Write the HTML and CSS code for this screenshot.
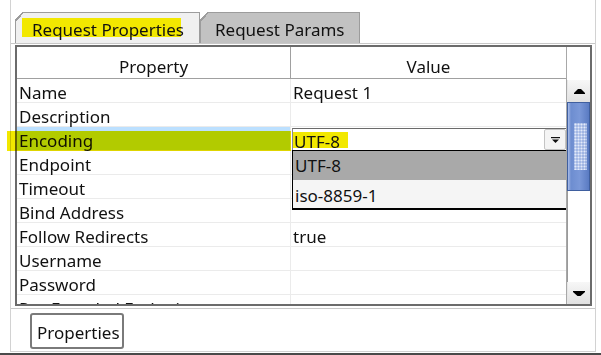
FILE: index.html
```html
<!DOCTYPE html>
<html lang="en">
<head>
<meta charset="UTF-8">
<title>Request Properties</title>
<link rel="stylesheet" href="styles.css">
</head>
<body>

<div class="window">
  <div class="tabs">
    <div class="tab active"><span class="mark">Request Properties</span></div>
    <div class="tab second">Request Params</div>
  </div>

  <div class="pane">
    <div class="panel">
      <div class="grid">
        <div class="head">
          <div class="hcell">Property</div>
          <div class="hcell">Value</div>
        </div>
        <div class="row"><div class="cell">Name</div><div class="cell">Request 1</div></div>
        <div class="row"><div class="cell">Description</div><div class="cell"></div></div>
        <div class="row sel">
          <div class="cell">Encoding</div>
          <div class="cell combo-cell">
            <div class="combo">
              <div class="combo-text"><span class="mark small">UTF-8</span></div>
              <div class="combo-btn">
                <svg width="9" height="6" viewBox="0 0 9 6"><rect x="0" y="0" width="9" height="1.2" fill="#111"/><polygon points="1,2.5 8,2.5 4.5,6" fill="#111"/></svg>
              </div>
            </div>
            <ul class="list">
              <li class="opt on">UTF-8</li>
              <li class="opt">iso-8859-1</li>
            </ul>
          </div>
        </div>
        <div class="row"><div class="cell">Endpoint</div><div class="cell"></div></div>
        <div class="row"><div class="cell">Timeout</div><div class="cell"></div></div>
        <div class="row"><div class="cell">Bind Address</div><div class="cell"></div></div>
        <div class="row"><div class="cell">Follow Redirects</div><div class="cell">true</div></div>
        <div class="row"><div class="cell">Username</div><div class="cell"></div></div>
        <div class="row"><div class="cell">Password</div><div class="cell"></div></div>
        <div class="row"><div class="cell">Pre-Encoded Endpoint</div><div class="cell"></div></div>
      </div>

      <div class="scroll">
        <div class="scroll-top"></div>
        <div class="sb-btn">
          <svg width="11" height="5" viewBox="0 0 11 5"><polygon points="4,0 7,0 11,4 11,5 0,5 0,4" fill="#000"/></svg>
        </div>
        <div class="thumb"><div class="grip"></div></div>
        <div class="track"></div>
        <div class="sb-btn">
          <svg width="12" height="5" viewBox="0 0 12 5"><polygon points="0,0 12,0 12,1 7.5,5 4.5,5 0,1" fill="#000"/></svg>
        </div>
      </div>
    </div>
  </div>

  <div class="footer">
    <button class="btn">Properties</button>
  </div>

  <div class="row-mark"></div>
</div>
<div class="baseline"></div>

</body>
</html>
```

FILE: styles.css
```css
* { box-sizing: border-box; }
body { margin:0; background:#fff; font-family:"Noto Sans", sans-serif; font-size:17px; color:#111; overflow:hidden; }

.window { position:relative; margin-left:10px; width:586px; height:352px; border:1px solid #d2d2d2; border-top:0; }

/* tabs */
.tabs { display:flex; height:43px; padding:12px 0 0 4px; }
.tab { position:relative; height:31px; border:1px solid #9c9c9c; border-bottom:0; background:#c2c2c2; line-height:23px; padding-top:5px; white-space:nowrap; }
.tab::before { content:""; position:absolute; left:-1px; top:-1px; width:8px; height:9px; background:linear-gradient(to bottom right, #fff 44%, #9c9c9c 44% 60%, transparent 60%); }
.tab.active { width:185px; background:#f0f0f0; padding-left:6px; }
.tab.second { width:160px; padding-left:14px; }

.mark { padding-left:10px; background:linear-gradient(#f2e800, #f2e800) 0 0 / calc(100% - 3px) 19px no-repeat; }
.mark.small { padding:0 8px 0 1px; background-position:0 2px; background-size:100% 16px; }

/* pane + grid panel */
.pane { border-top:1px solid #c8c8c8; border-bottom:1px solid #c8c8c8; padding:1px 0 2px 4px; }
.panel { display:flex; width:577px; height:261px; border:2px solid #6b6b6b; background:#fff; }
.grid { width:550px; border-right:1px solid #a8a8a8; overflow:hidden; }

.head { display:flex; height:32px; border-bottom:1px solid #a0a0a0; }
.hcell { flex:1; text-align:center; padding-top:8px; line-height:23px; }
.hcell:first-child { flex:none; width:274px; border-right:1px solid #a0a0a0; }

.row { display:flex; height:24px; border-bottom:1px solid #ebebeb; }
.cell { flex:1; line-height:22px; padding:3px 0 0 2px; white-space:nowrap; }
.cell:first-child { flex:none; width:274px; border-right:1px solid #ebebeb; }
.row.sel .cell:first-child { background:#bce0ff; }

.combo-cell { position:relative; padding:1px 0 0 1px; }
.combo { display:flex; height:22px; border-top:1px solid #6b6b6b; border-left:1px solid #8a8a8a; background:#fff; }
.combo-text { flex:1; line-height:21px; padding-top:2px; }
.combo-btn { width:22px; height:21px; border:1px solid #c4c4c4; border-radius:2px; background:#f4f4f4; display:flex; align-items:center; justify-content:center; }

.list { position:absolute; left:1px; top:23px; z-index:2; width:275px; margin:0; padding:0; list-style:none; border:1px solid #000; border-bottom-width:2px; background:#f5f5f5; }
.opt { height:28px; line-height:25px; padding:3px 0 0 2px; }
.opt.on { height:29px; line-height:28px; padding-top:1px; background:#a9a9a9; }

/* scrollbar */
.scroll { width:23px; display:flex; flex-direction:column; }
.scroll-top { height:33px; }
.sb-btn { height:22px; background:linear-gradient(#f7f7f7, #e1e1e1); border-left:1px solid #e6e6e6; display:flex; align-items:center; justify-content:center; }
.thumb { position:relative; height:89px; border:1px solid #3f5f9f; background:linear-gradient(to right, #a9bdea, #6d8dd0 3px, #7a98d8 55%, #5a7bc2); }
.grip { position:absolute; left:6px; top:20px; width:13px; height:47px; background-image:radial-gradient(circle, #e4ebfa 0.8px, transparent 1.3px), radial-gradient(circle, #c9d6f2 0.8px, transparent 1.3px); background-size:3px 3px, 3px 3px; background-position:0 0, 1.5px 1.5px; }
.track { flex:1; background:#fff; border-left:1px solid #9a9a9a; }

/* highlighter over the Encoding row */
.row-mark { position:absolute; left:-4px; top:131px; width:284px; height:20px; background:#f2e800; mix-blend-mode:multiply; }

.footer { padding:4px 0 0 19px; }
.btn { width:94px; height:36px; border:2px solid #7a7a7a; border-radius:3px; background:#fff; font:inherit; color:inherit; padding:2px 5px 0; text-align:left; }

.baseline { height:2px; margin-top:1px; background:#4a4a4a; }
```
